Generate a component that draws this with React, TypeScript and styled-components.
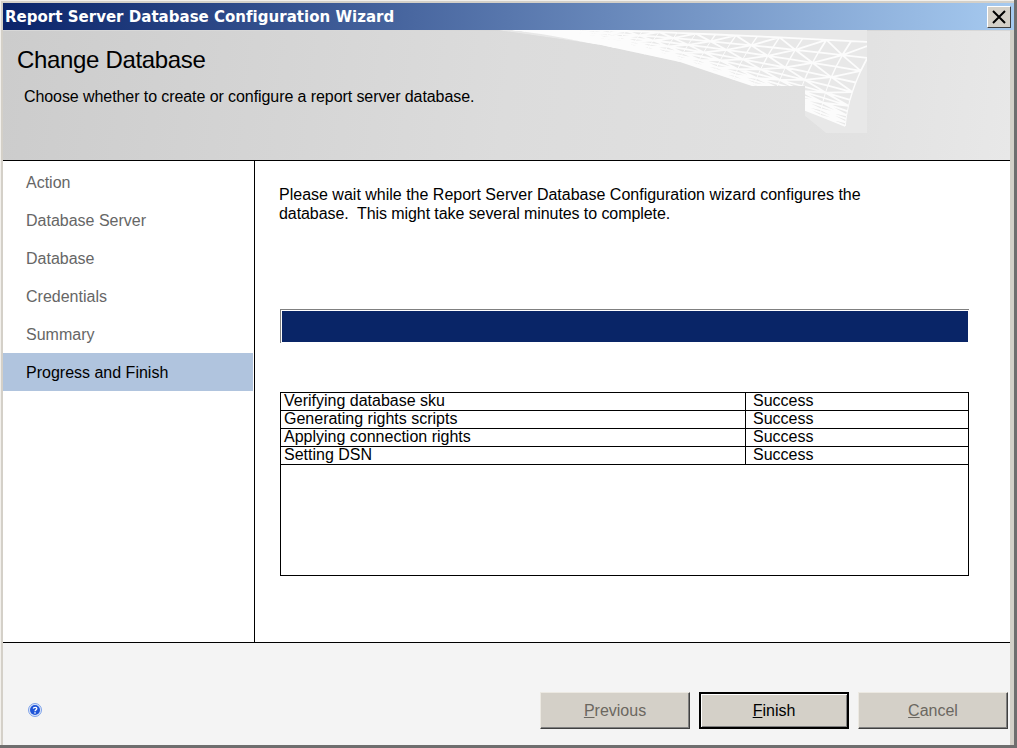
import React from 'react';
import styled, { createGlobalStyle } from 'styled-components';

const GlobalStyle = createGlobalStyle`
  html, body {
    margin: 0;
    padding: 0;
    background: #d4d0c8;
  }
  body {
    font-family: "Liberation Sans", Arial, sans-serif;
    overflow: hidden;
  }
`;

const steps = ['Action', 'Database Server', 'Database', 'Credentials', 'Summary', 'Progress and Finish'];
const results = ['Verifying database sku', 'Generating rights scripts', 'Applying connection rights', 'Setting DSN'];

// roof mesh: arcs crossed with rows fanning out of the top left, plus diagonals
const rowEnds = [42, 58, 72, 85, 96, 105, 112, 118, 123, 127, 131, 135];

function meshPoint(i: number, j: number) {
  const xTop = 885 - i * (27 - i * 0.45);
  let x = xTop;
  let y = 31;
  for (let n = 0; n < 6; n++) {
    const f = Math.pow(Math.max(x - 490, 0) / 377, 1.5);
    y = 28 + (rowEnds[j] - 28) * f;
    const d = Math.min(y - 31, 107);
    x = xTop - (d > 0 ? 0.75 * d - 0.0035 * d * d : 0.75 * d);
  }
  return { x, y };
}

function meshPaths() {
  const buckets: Record<string, string> = { wide: '', mid: '', thin: '' };
  const add = (a: { x: number; y: number }, b: { x: number; y: number }) => {
    const len = Math.hypot(a.x - b.x, a.y - b.y);
    const key = len > 14 ? 'wide' : len > 8 ? 'mid' : 'thin';
    buckets[key] += `M${a.x.toFixed(1)} ${a.y.toFixed(1)}L${b.x.toFixed(1)} ${b.y.toFixed(1)}`;
  };
  for (let i = 0; i < 30; i++) {
    for (let j = 0; j < rowEnds.length; j++) {
      const p = meshPoint(i, j);
      if (i < 29) add(p, meshPoint(i + 1, j));
      if (j < rowEnds.length - 1) add(p, meshPoint(i, j + 1));
      if (i < 29 && j < rowEnds.length - 1) {
        if ((i + j) % 2 === 0) add(p, meshPoint(i + 1, j + 1));
        else add(meshPoint(i + 1, j), meshPoint(i, j + 1));
      }
    }
  }
  return buckets;
}

const mesh = meshPaths();

function App() {
  return (
    <>
      <GlobalStyle />
      <Win>
        <Inner>
          <TitleBar>
            <TitleText>Report Server Database Configuration Wizard</TitleText>
            <CloseBtn>
              <svg width="14" height="14" viewBox="0 0 14 14">
                <path d="M1 1L13 13M13 1L1 13" stroke="#000" strokeWidth="2" fill="none" />
              </svg>
            </CloseBtn>
          </TitleBar>
          <Banner>
            <Mesh viewBox="490 30 380 104" width="380" height="104">
              <defs>
                <clipPath id="roof">
                  <polygon points="497,30 601,45 680,62 752,86 805,86 805,116 826,133 867,133 867,30" />
                </clipPath>
              </defs>
              <g clipPath="url(#roof)" fill="none" stroke="#fcfcfc">
                <polygon points="497,30 601,45 680,62 752,86 805,86 805,116 826,133 867,133 867,30" fill="#e8e8e8" stroke="none" />
                <path d={mesh.wide} strokeWidth="1.8" />
                <path d={mesh.mid} strokeWidth="1.4" />
                <path d={mesh.thin} strokeWidth="1" />
              </g>
            </Mesh>
            <Heading>Change Database</Heading>
            <SubHeading>Choose whether to create or configure a report server database.</SubHeading>
          </Banner>
          <Middle>
            <Sidebar>
              {steps.map((s, i) => (
                <Step key={s} $active={i === steps.length - 1}>
                  {s}
                </Step>
              ))}
            </Sidebar>
            <Content>
              <Intro>
                Please wait while the Report Server Database Configuration wizard configures the
                <br />
                <IntroTail>database.&nbsp; This might take several minutes to complete.</IntroTail>
              </Intro>
              <ProgressTrack>
                <ProgressFill />
              </ProgressTrack>
              <ResultBox>
                {results.map((r) => (
                  <ResultRow key={r}>
                    <ResultName>{r}</ResultName>
                    <ResultStatus>Success</ResultStatus>
                  </ResultRow>
                ))}
              </ResultBox>
            </Content>
          </Middle>
          <Footer>
            <HelpIcon>
              <svg width="14" height="14" viewBox="0 0 14 14">
                <circle cx="7" cy="7" r="6.5" fill="#dbe6fa" stroke="#7fa2e8" strokeWidth="1" />
                <circle cx="7" cy="7" r="5" fill="#1f55d8" />
                <path d="M5.3 5.6C5.4 3.9 8.8 3.9 8.8 5.6C8.8 6.9 7 6.8 7 8.2" stroke="#fff" strokeWidth="1.3" fill="none" />
                <rect x="6.3" y="9.2" width="1.4" height="1.4" fill="#fff" />
              </svg>
            </HelpIcon>
            <Buttons>
              <WizButton disabled>
                <u>P</u>revious
              </WizButton>
              <WizButton $primary>
                <u>F</u>inish
              </WizButton>
              <WizButton disabled>
                <u>C</u>ancel
              </WizButton>
            </Buttons>
          </Footer>
        </Inner>
      </Win>
    </>
  );
}

export default App;

const Win = styled.div`
  box-sizing: border-box;
  width: 1017px;
  height: 748px;
  background: #d4d0c8;
  border-right: 3px solid #6e6e6e;
  border-bottom: 3px solid #6e6e6e;
  box-shadow: inset 1px 1px 0 #f2f0ec;
  padding: 3px 4px 0 3px;
`;

const Inner = styled.div`
  display: flex;
  flex-direction: column;
  height: 100%;
`;

const TitleBar = styled.div`
  height: 27px;
  flex: none;
  margin-right: -4px;
  display: flex;
  align-items: center;
  justify-content: space-between;
  padding: 0 3px 0 2px;
  background: linear-gradient(90deg, #0a246a, #a6caf0);
`;

const TitleText = styled.div`
  font-family: "DejaVu Sans", sans-serif;
  font-weight: 700;
  font-size: 15px;
  letter-spacing: 0.02px;
  padding-top: 1px;
  color: #fff;
  white-space: nowrap;
`;

const CloseBtn = styled.div`
  box-sizing: border-box;
  width: 24px;
  height: 22px;
  background: #d4d0c8;
  display: flex;
  align-items: center;
  justify-content: center;
  border-top: 1px solid #fff;
  border-left: 1px solid #fff;
  border-right: 1px solid #404040;
  border-bottom: 1px solid #404040;
`;

const Banner = styled.div`
  position: relative;
  flex: none;
  box-sizing: border-box;
  height: 131px;
  border-top: 1px solid #d8d8d8;
  border-bottom: 1px solid #000;
  background: linear-gradient(97deg, #cccccc 0%, #dcdcdc 50%, #e2e2e2 85%, #e8e8e8 100%);
  padding: 15px 0 0 14px;
`;

const Mesh = styled.svg`
  position: absolute;
  left: 487px;
  top: -1px;
`;

const Heading = styled.h1`
  position: relative;
  margin: 0;
  font-weight: 400;
  font-size: 24px;
  line-height: 28px;
  letter-spacing: -0.33px;
  color: #000;
`;

const SubHeading = styled.p`
  position: relative;
  margin: 14px 0 0 7px;
  font-size: 16px;
  line-height: 18px;
  letter-spacing: -0.08px;
  color: #000;
`;

const Middle = styled.div`
  flex: 1;
  display: flex;
  background: #fff;
  border-bottom: 1px solid #000;
  min-height: 0;
`;

const Sidebar = styled.div`
  box-sizing: border-box;
  width: 252px;
  flex: none;
  padding: 2px 1px 0 0;
  border-right: 1px solid #000;
`;

const Step = styled.div<{ $active?: boolean }>`
  height: 38px;
  padding-left: 23px;
  line-height: 40px;
  font-size: 16px;
  color: ${(p) => (p.$active ? '#000' : '#666')};
  background: ${(p) => (p.$active ? '#b0c4de' : 'transparent')};
`;

const Content = styled.div`
  flex: 1;
  padding: 24px 0 0 24px;
`;

const Intro = styled.p`
  margin: 0;
  font-size: 16px;
  line-height: 19px;
  color: #000;
`;

const IntroTail = styled.span`
  letter-spacing: -0.08px;
`;

const ProgressTrack = styled.div`
  box-sizing: border-box;
  width: 689px;
  height: 34px;
  margin-top: 86px;
  margin-left: 1px;
  border-top: 1px solid #808080;
  border-left: 1px solid #808080;
  padding-top: 1px;
`;

const ProgressFill = styled.div`
  height: 31px;
  width: 686px;
  margin-left: 1px;
  background: #092567;
`;

const ResultBox = styled.div`
  box-sizing: border-box;
  width: 689px;
  height: 184px;
  margin: 49px 0 0 1px;
  border: 1px solid #000;
`;

const ResultRow = styled.div`
  box-sizing: border-box;
  display: flex;
  height: 18px;
  border-bottom: 1px solid #000;
  font-size: 16px;
  line-height: 16px;
  overflow: hidden;
`;

const ResultName = styled.div`
  box-sizing: border-box;
  width: 465px;
  padding-left: 3px;
  border-right: 1px solid #000;
`;

const ResultStatus = styled.div`
  padding-left: 7px;
`;

const Footer = styled.div`
  box-sizing: border-box;
  flex: none;
  height: 102px;
  display: flex;
  align-items: flex-end;
  justify-content: space-between;
  background: #f4f4f4;
  padding: 0 2px 16px 25px;
`;

const HelpIcon = styled.div`
  height: 14px;
  margin-bottom: 12px;
`;

const Buttons = styled.div`
  display: flex;
  gap: 9px;
`;

const WizButton = styled.button<{ $primary?: boolean }>`
  box-sizing: border-box;
  width: 150px;
  height: 37px;
  padding: 0;
  background: #d4d0c8;
  font-family: "Liberation Sans", Arial, sans-serif;
  font-size: 16px;
  color: ${(p) => (p.disabled ? '#6b6760' : '#000')};
  border-style: solid;
  border-width: ${(p) => (p.$primary ? '2px' : '1px')};
  border-color: ${(p) => (p.$primary ? '#000' : '#ece9e2 #404040 #404040 #ece9e2')};
  box-shadow: ${(p) => (p.$primary ? 'inset 1px 1px 0 #fff, inset -1px -1px 0 #808080' : 'inset -1px -1px 0 #808080')};
`;
